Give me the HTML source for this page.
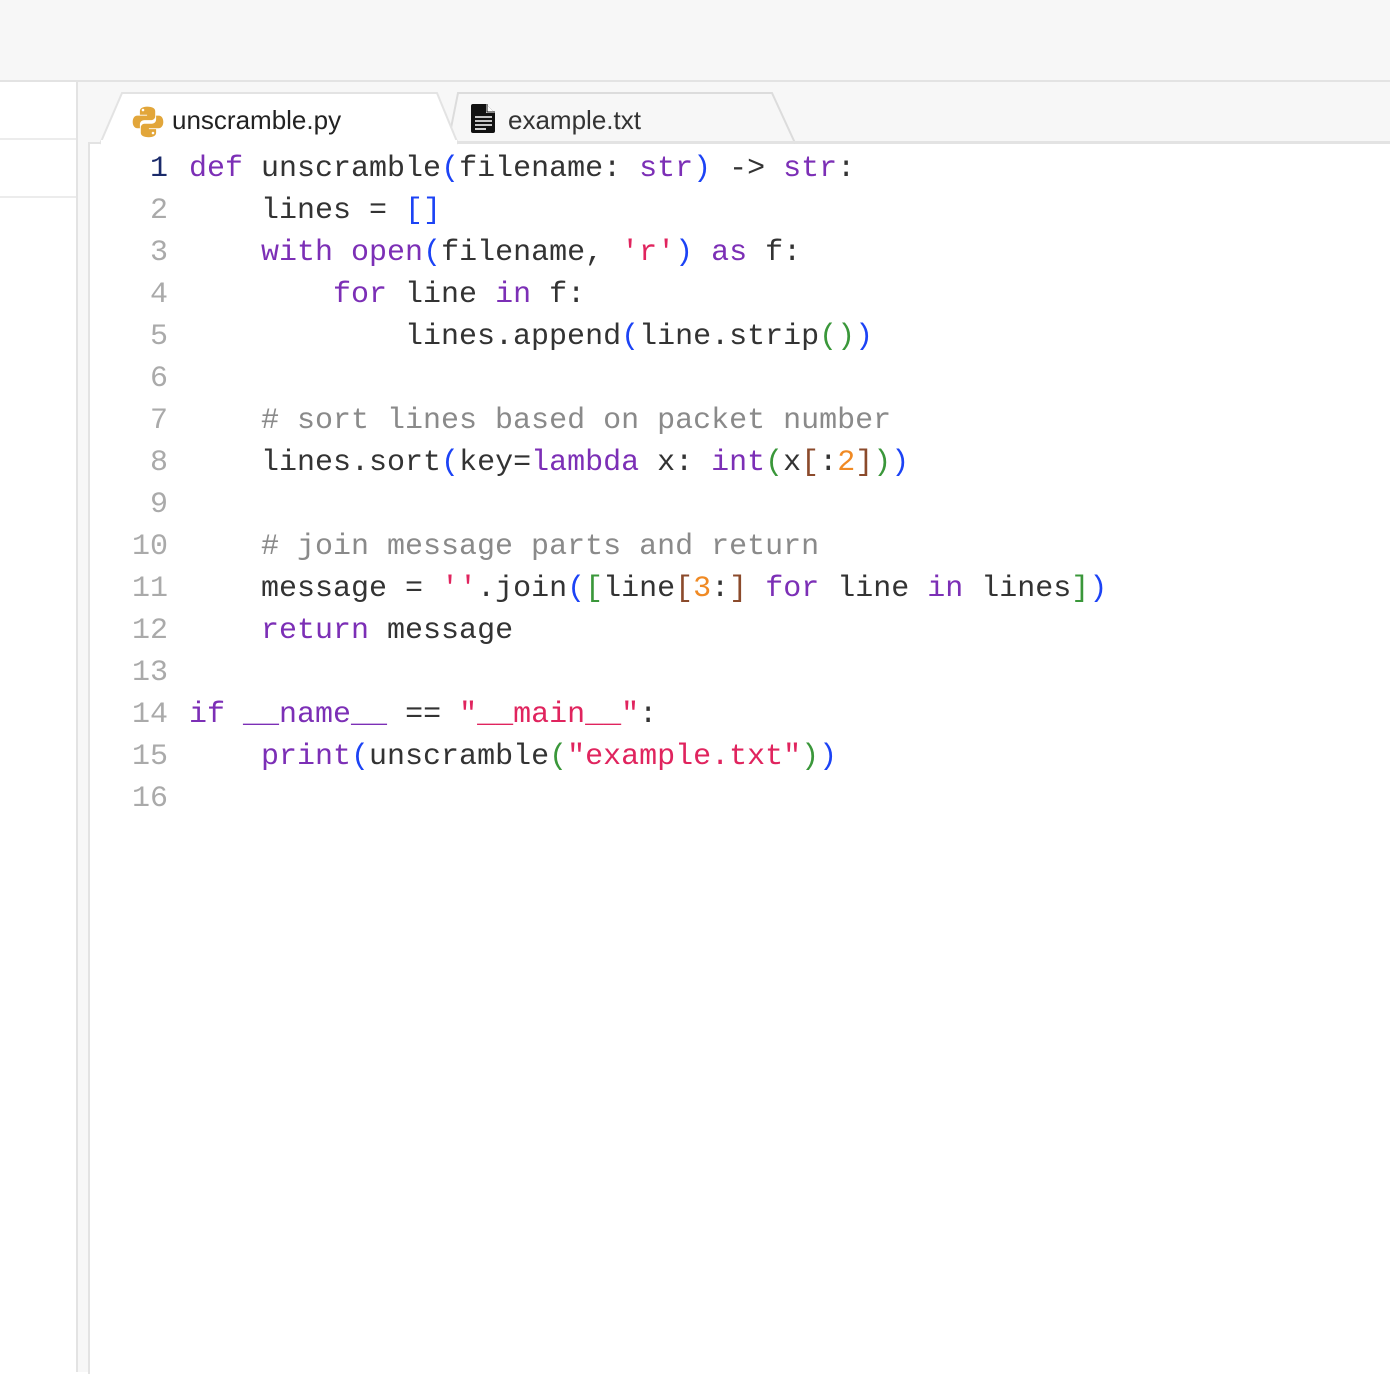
<!DOCTYPE html>
<html><head><meta charset="utf-8"><style>
html,body{margin:0;padding:0;width:1390px;height:1372px;overflow:hidden;background:#fff;font-family:"Liberation Sans",sans-serif;}
.top{position:absolute;left:0;top:0;width:1390px;height:80px;background:#f7f7f7;border-bottom:2px solid #e3e3e3;}
.side{position:absolute;left:0;top:82px;width:76px;height:1290px;background:#fff;border-right:2px solid #e3e3e3;}
.side .l1{position:absolute;left:0;top:56px;width:76px;height:2px;background:#ececec}
.side .l2{position:absolute;left:0;top:114px;width:76px;height:2px;background:#ececec}
.gut{position:absolute;left:78px;top:82px;width:1312px;height:1290px;background:#f7f7f7;}
.ed{position:absolute;left:88px;top:142px;width:1302px;height:1230px;background:#fff;border-left:2px solid #e3e3e3;border-top:2px solid #e3e3e3;}
svg.tabs{position:absolute;left:0;top:0;}
.tt{position:absolute;font-family:"Liberation Sans",sans-serif;font-size:26px;color:#222;top:105px;}
pre{position:absolute;margin:0;top:148px;font-family:"Liberation Mono",monospace;font-size:30px;line-height:42px;color:#333;}
.ln{left:110px;width:58px;text-align:right;color:#aaa;}
.code{left:189px;}
.k{color:#7c2fb6}.b{color:#1c43f5}.s{color:#e0245e}.g{color:#3a973a}.o{color:#f08a24}.r{color:#8b4a2b}.c{color:#8a8a8a}
</style></head><body>
<div class="top"></div>
<div class="side"><div class="l1"></div><div class="l2"></div></div>
<div class="gut"></div>
<div class="ed"></div>
<svg class="tabs" width="1390" height="150">
<path d="M448 143 L458 93 L772 93 L795 143" fill="#f7f7f7" stroke="#dcdcdc" stroke-width="2"/>
<line x1="448" y1="142" x2="1390" y2="142" stroke="#e3e3e3" stroke-width="2"/>
<path d="M100 144 L122 93 L437 93 L458 144 Z" fill="#fff" stroke="none"/>
<path d="M100 144 L122 93 L437 93 L458 144" fill="none" stroke="#e3e3e3" stroke-width="2"/>
<rect x="101" y="140" width="356" height="6" fill="#fff"/>
<g fill="#e2a63a" transform="translate(148 121) scale(0.9) translate(-148 -121)">
<path d="M147 105c-5 0-8 2-8 5v4h8v1h-11c-3 0-5 3-5 7s2 7 5 7h3v-4c0-3 2-5 5-5h8c2 0 4-2 4-4v-6c0-3-3-5-9-5z"/>
<path d="M149 139c5 0 8-2 8-5v-4h-8v-1h11c3 0 5-3 5-7s-2-7-5-7h-3v4c0 3-2 5-5 5h-8c-2 0-4 2-4 4v6c0 3 3 5 9 5z"/>
</g>
<circle cx="143" cy="110" r="1.3" fill="#fff"/><circle cx="153" cy="133" r="1.3" fill="#fff"/>
<path d="M473 104 h13 l9 9 v18 a2 2 0 0 1-2 2 h-20 a2 2 0 0 1-2-2 v-25 a2 2 0 0 1 2-2z" fill="#111"/>
<path d="M486 104 v9 h9z" fill="#fff"/><path d="M487 104 v8 h8" fill="none" stroke="#111" stroke-width="1"/>
<g stroke="#fff" stroke-width="1.6"><line x1="475" y1="117" x2="492" y2="117"/><line x1="475" y1="121" x2="492" y2="121"/><line x1="475" y1="125" x2="492" y2="125"/><line x1="475" y1="129" x2="486" y2="129"/></g>
</svg>
<div class="tt" style="left:172px">unscramble.py</div>
<div class="tt" style="left:508px;color:#333">example.txt</div>
<pre class="ln"><span style="color:#1a2a6a">1</span>
2
3
4
5
6
7
8
9
10
11
12
13
14
15
16</pre>
<pre class="code"><span class="k">def</span> unscramble<span class="b">(</span>filename: <span class="k">str</span><span class="b">)</span> -&gt; <span class="k">str</span>:
    lines = <span class="b">[]</span>
    <span class="k">with</span> <span class="k">open</span><span class="b">(</span>filename, <span class="s">'r'</span><span class="b">)</span> <span class="k">as</span> f:
        <span class="k">for</span> line <span class="k">in</span> f:
            lines.append<span class="b">(</span>line.strip<span class="g">()</span><span class="b">)</span>

    <span class="c"># sort lines based on packet number</span>
    lines.sort<span class="b">(</span>key=<span class="k">lambda</span> x: <span class="k">int</span><span class="g">(</span>x<span class="r">[</span>:<span class="o">2</span><span class="r">]</span><span class="g">)</span><span class="b">)</span>

    <span class="c"># join message parts and return</span>
    message = <span class="s">''</span>.join<span class="b">(</span><span class="g">[</span>line<span class="r">[</span><span class="o">3</span>:<span class="r">]</span> <span class="k">for</span> line <span class="k">in</span> lines<span class="g">]</span><span class="b">)</span>
    <span class="k">return</span> message

<span class="k">if</span> <span class="k">__name__</span> == <span class="s">"__main__"</span>:
    <span class="k">print</span><span class="b">(</span>unscramble<span class="g">(</span><span class="s">"example.txt"</span><span class="g">)</span><span class="b">)</span>
</pre>
</body></html>
